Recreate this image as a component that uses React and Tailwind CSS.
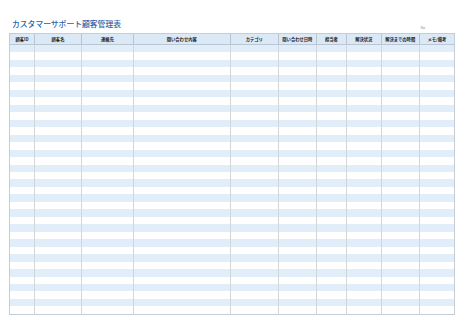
import React from "react";

const cols = ["顧客ID", "顧客名", "連絡先", "問い合わせ内容", "カテゴリ", "問い合わせ日時", "担当者", "解決状況", "解決までの時間", "メモ/備考"];
const grid = "grid grid-cols-[25px_47px_52px_96.5px_48.5px_37.7px_30.3px_34.7px_38px_34.3px]";

export default function App() {
  const rows = Array.from({ length: 36 }, (_, i) => i);
  return (
    <div className="w-[474px] h-[335px] bg-white relative" style={{ fontFamily: '"Noto Sans CJK JP", "Noto Sans", sans-serif' }}>
      <div className="flex items-end justify-between h-[33px] pl-[12px] pr-[48px] pb-[5px]">
        <div className="text-[7.8px] leading-none text-[#2f5fa6] font-medium">カスタマーサポート顧客管理表</div>
        <div className="text-[3.5px] leading-none text-[#888] mb-[-1px]">No.</div>
      </div>
      <div className="ml-[9px] w-[444px] border border-[#c4ccd6] box-content">
        <div className={`${grid} h-[11px] bg-[#dbe8f6] border-b border-[#b9c6d4]`}>
          {cols.map((c, i) => (
            <div key={i} className={`flex items-center justify-center text-[4.3px] font-bold text-[#222] leading-none ${i < cols.length - 1 ? "border-r border-[#b9c4d0]" : ""}`}>
              {c}
            </div>
          ))}
        </div>
        {rows.map((r) => (
          <div key={r} className={`${grid} h-[7.47px] ${r % 2 === 0 ? "bg-[#e1edf9]" : "bg-white"}`}>
            {cols.map((c, i) => (
              <div key={i} className={i < cols.length - 1 ? "border-r border-[#d2d5da]" : ""} />
            ))}
          </div>
        ))}
      </div>
    </div>
  );
}
